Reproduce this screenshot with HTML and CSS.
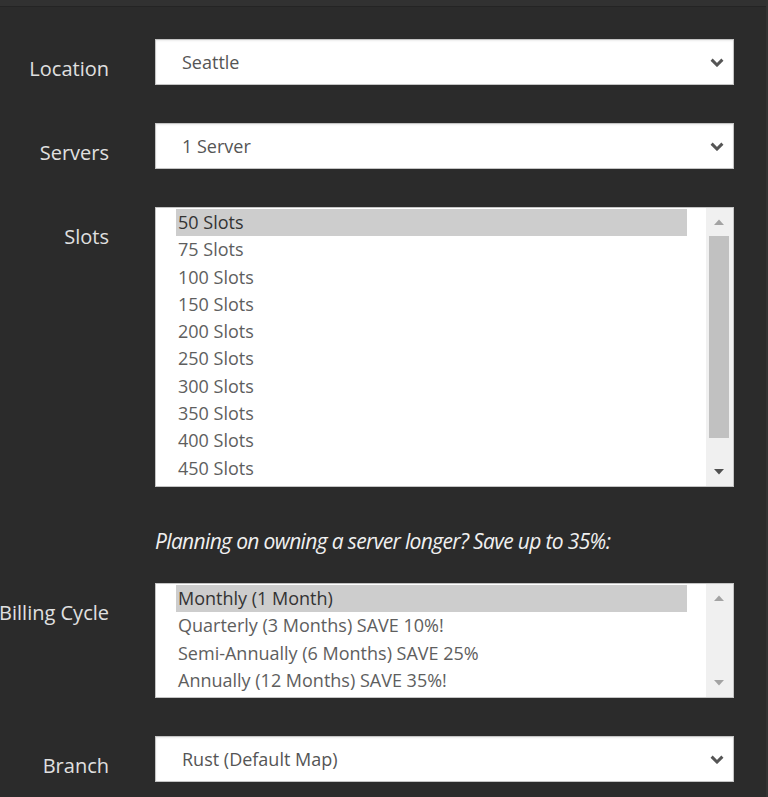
FILE: index.html
```html
<!DOCTYPE html>
<html lang="en">
<head>
<meta charset="utf-8">
<title>Server Configuration</title>
<link rel="stylesheet" href="styles.css">
</head>
<body>
<div class="page">
  <div class="topbar"></div>
  <form class="config">
    <div class="label">Location</div>
    <div class="select">
      <span class="select-value">Seattle</span>
      <svg class="chevron" width="14" height="9" viewBox="0 0 14 9"><path d="M1.6 1.6 L7 7 L12.4 1.6" fill="none" stroke="#555" stroke-width="3"/></svg>
    </div>

    <div class="label">Servers</div>
    <div class="select">
      <span class="select-value">1 Server</span>
      <svg class="chevron" width="14" height="9" viewBox="0 0 14 9"><path d="M1.6 1.6 L7 7 L12.4 1.6" fill="none" stroke="#555" stroke-width="3"/></svg>
    </div>

    <div class="label">Slots</div>
    <div class="listbox listbox-slots">
      <ul class="options">
        <li class="option selected">50 Slots</li>
        <li class="option">75 Slots</li>
        <li class="option">100 Slots</li>
        <li class="option">150 Slots</li>
        <li class="option">200 Slots</li>
        <li class="option">250 Slots</li>
        <li class="option">300 Slots</li>
        <li class="option">350 Slots</li>
        <li class="option">400 Slots</li>
        <li class="option">450 Slots</li>
      </ul>
      <div class="scrollbar">
        <div class="sb-btn"><svg width="10" height="6" viewBox="0 0 10 6"><polygon points="0,6 5,0.5 10,6" fill="#a3a3a3"/></svg></div>
        <div class="sb-track"><div class="sb-thumb"></div></div>
        <div class="sb-btn"><svg width="10" height="6" viewBox="0 0 10 6"><polygon points="0,0 10,0 5,5.5" fill="#505050"/></svg></div>
      </div>
    </div>

    <div class="label"></div>
    <p class="hint">Planning on owning a server longer? Save up to 35%:</p>

    <div class="label">Billing Cycle</div>
    <div class="listbox listbox-billing">
      <ul class="options">
        <li class="option selected">Monthly (1 Month)</li>
        <li class="option">Quarterly (3 Months) SAVE 10%!</li>
        <li class="option">Semi-Annually (6 Months) SAVE 25%</li>
        <li class="option">Annually (12 Months) SAVE 35%!</li>
      </ul>
      <div class="scrollbar">
        <div class="sb-btn"><svg width="10" height="6" viewBox="0 0 10 6"><polygon points="0,6 5,0.5 10,6" fill="#a3a3a3"/></svg></div>
        <div class="sb-track"></div>
        <div class="sb-btn"><svg width="10" height="6" viewBox="0 0 10 6"><polygon points="0,0 10,0 5,5.5" fill="#a3a3a3"/></svg></div>
      </div>
    </div>

    <div class="label">Branch</div>
    <div class="select">
      <span class="select-value">Rust (Default Map)</span>
      <svg class="chevron" width="14" height="9" viewBox="0 0 14 9"><path d="M1.6 1.6 L7 7 L12.4 1.6" fill="none" stroke="#555" stroke-width="3"/></svg>
    </div>
  </form>
</div>
</body>
</html>
```

FILE: styles.css
```css
html, body {
  margin: 0;
  padding: 0;
  background: #2b2b2b;
}

body {
  font-family: "Open Sans", "DejaVu Sans", sans-serif;
  overflow: hidden;
}

.page {
  width: 766px;
  height: 797px;
  border-right: 2px solid #333333;
  box-sizing: content-box;
}

.topbar {
  height: 6px;
  background: #313131;
  border-bottom: 1px solid #242424;
}

.config {
  display: grid;
  grid-template-columns: 109px 579px;
  column-gap: 46px;
  align-items: start;
  padding-top: 32px;
  margin: 0;
}

.label {
  display: flex;
  justify-content: flex-end;
  white-space: nowrap;
  color: #e0e0e0;
  font-size: 20px;
  line-height: 27px;
  padding-top: 16px;
  margin-bottom: 38px;
}

.select {
  height: 46px;
  box-sizing: border-box;
  background: #fff;
  border: 1px solid #c4c4c4;
  box-shadow: inset 0 1px 2px rgba(0, 0, 0, 0.08);
  display: flex;
  align-items: center;
  justify-content: space-between;
  padding: 0 9px 0 26px;
  margin-bottom: 38px;
}

.select-value {
  color: #555;
  font-size: 18px;
  line-height: 25px;
}

.chevron {
  display: block;
}

.listbox {
  display: flex;
  box-sizing: border-box;
  background: #fff;
  border: 1px solid #c4c4c4;
  margin-bottom: 38px;
  overflow: hidden;
}

.listbox-slots {
  height: 280px;
}

.listbox-billing {
  height: 115px;
}

.options {
  flex: 1;
  list-style: none;
  margin: 0;
  padding: 1px 19px 0 20px;
  overflow: hidden;
}

.option {
  font-size: 18px;
  line-height: 27.3px;
  height: 27.3px;
  padding-left: 2px;
  color: #5e5e5e;
  white-space: nowrap;
}

.option.selected {
  background: #cdcdcd;
  color: #333;
}

.scrollbar {
  width: 27px;
  background: #f0f0f0;
  display: flex;
  flex-direction: column;
}

.sb-btn {
  height: 28px;
  display: flex;
  align-items: center;
  justify-content: center;
  padding-right: 1px;
}

.sb-btn svg {
  display: block;
}

.sb-track {
  flex: 1;
  padding-left: 3px;
}

.sb-thumb {
  width: 20px;
  height: 202px;
  background: #c1c1c1;
}

.hint {
  margin: 0 0 25px 0;
  color: #f0f0f0;
  font-style: italic;
  font-size: 21px;
  letter-spacing: -0.65px;
  line-height: 33px;
  white-space: nowrap;
}
```
